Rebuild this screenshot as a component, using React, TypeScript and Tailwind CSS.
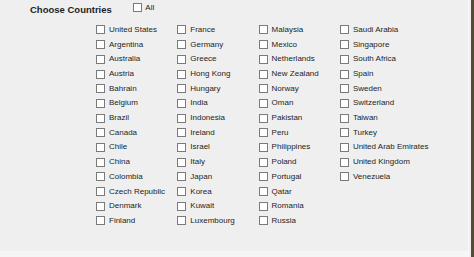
import React from "react";

const columns: string[][] = [
  [
    "United States",
    "Argentina",
    "Australia",
    "Austria",
    "Bahrain",
    "Belgium",
    "Brazil",
    "Canada",
    "Chile",
    "China",
    "Colombia",
    "Czech Republic",
    "Denmark",
    "Finland",
  ],
  [
    "France",
    "Germany",
    "Greece",
    "Hong Kong",
    "Hungary",
    "India",
    "Indonesia",
    "Ireland",
    "Israel",
    "Italy",
    "Japan",
    "Korea",
    "Kuwait",
    "Luxembourg",
  ],
  [
    "Malaysia",
    "Mexico",
    "Netherlands",
    "New Zealand",
    "Norway",
    "Oman",
    "Pakistan",
    "Peru",
    "Philippines",
    "Poland",
    "Portugal",
    "Qatar",
    "Romania",
    "Russia",
  ],
  [
    "Saudi Arabia",
    "Singapore",
    "South Africa",
    "Spain",
    "Sweden",
    "Switzerland",
    "Taiwan",
    "Turkey",
    "United Arab Emirates",
    "United Kingdom",
    "Venezuela",
  ],
];

function Box() {
  return <span className="block w-[9px] h-[9px] shrink-0 border border-[#7a7a7a] bg-white" />;
}

export default function App() {
  return (
    <div
      className="w-[474px] h-[257px] flex bg-[#efefef] text-[#1e1e1e] overflow-hidden"
      style={{ fontFamily: '"Liberation Sans", Arial, sans-serif' }}
    >
      <div className="flex-1 flex flex-col">
        {/* header */}
        <div className="flex items-start h-[22.6px] pt-[3px]">
          <span className="ml-[30px] mt-[1px] text-[9.5px] font-bold leading-[11px]">Choose Countries</span>
          <label className="ml-[21px] flex items-center gap-[3.5px]">
            <Box />
            <span className="text-[8px] leading-[9px]">All</span>
          </label>
        </div>

        {/* country list */}
        <div className="flex ml-[96px]">
          {columns.map((col, i) => (
            <div key={i} className={i < 3 ? "w-[81.3px] flex flex-col" : "flex flex-col"}>
              {col.map((name) => (
                <label key={name} className="h-[14.7px] flex items-center gap-[4px]">
                  <Box />
                  <span className="text-[8px] leading-none whitespace-nowrap">{name}</span>
                </label>
              ))}
            </div>
          ))}
        </div>

        <div className="flex-1" />
        <div className="h-[6px] bg-[#f5f5f5]" />
      </div>
      <div className="w-[1px] bg-[#f7f7f7] mr-[2px]" />
      <div className="w-[3px] bg-[#564b33]" />
    </div>
  );
}
